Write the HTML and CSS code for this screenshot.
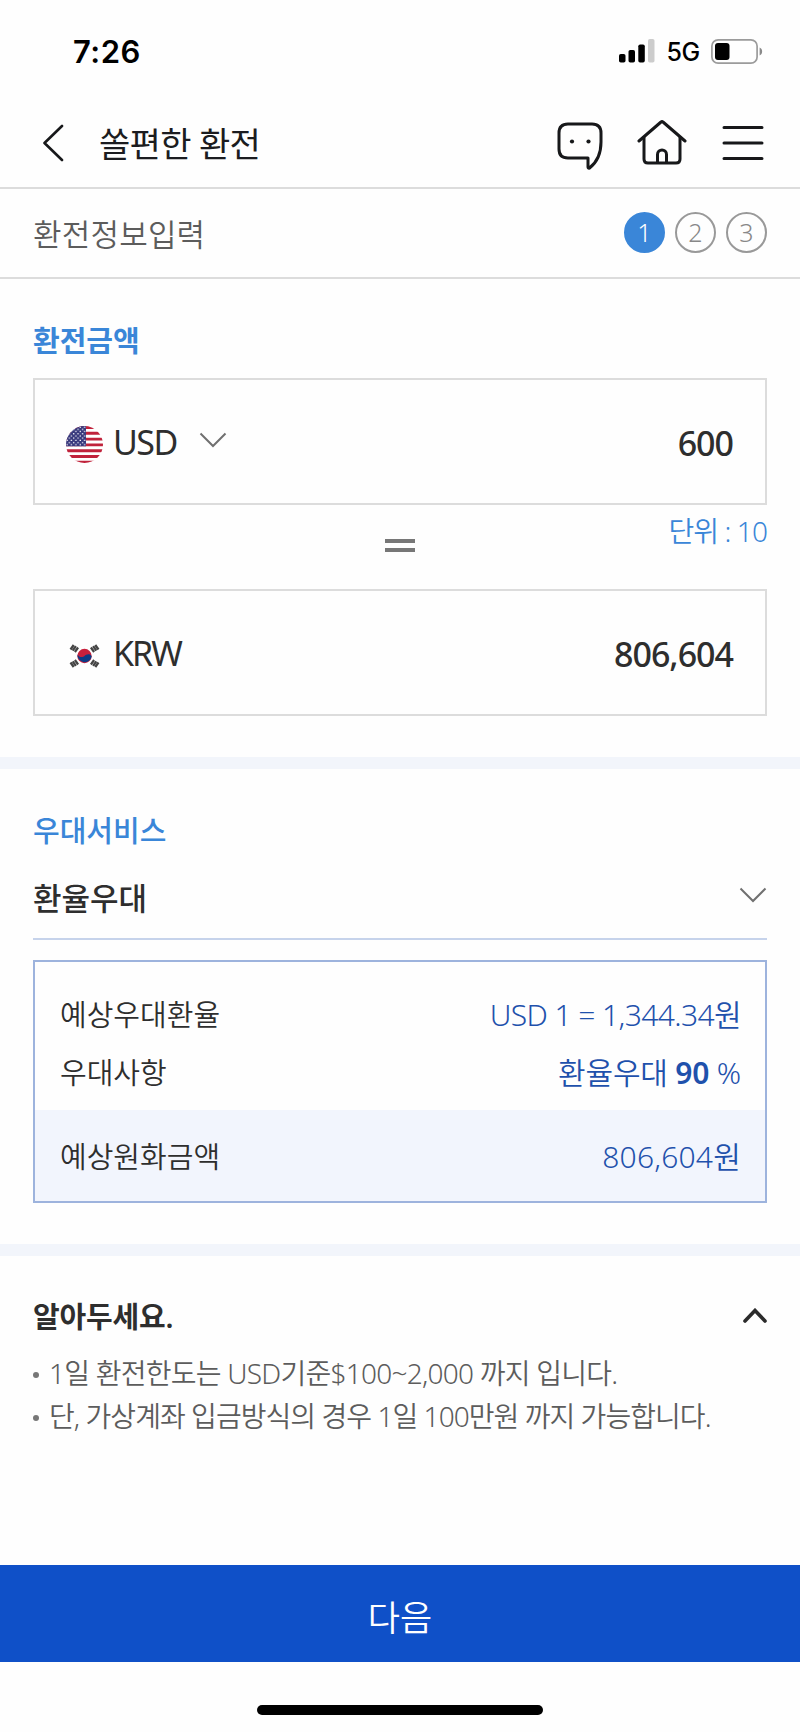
FILE: index.html
```html
<!DOCTYPE html>
<html lang="ko">
<head>
  <meta charset="UTF-8" />
  <meta name="viewport" content="width=device-width, initial-scale=1.0"/>
  <title>쏠편한 환전</title>
  <link rel="stylesheet" href="styles.css">
</head>
<body>
  <!-- Status bar -->
  <div class="status-bar">
    <span class="time">7:26</span>
    <div class="status-icons">
      <svg class="signal" width="36" height="24" viewBox="0 0 36 24">
        <rect x="0" y="15" width="6.5" height="8.5" rx="1.8"/>
        <rect x="9.5" y="11" width="6.5" height="12.5" rx="1.8"/>
        <rect x="19.3" y="5.5" width="6.5" height="18" rx="1.8"/>
        <rect x="29" y="0" width="6.5" height="23.5" rx="1.8" fill="#ccc"/>
      </svg>
      <span class="network">5G</span>
      <svg class="battery" width="52" height="25" viewBox="0 0 52 25">
        <rect x="0.9" y="0.9" width="45.2" height="23.2" rx="6.2" fill="none" stroke="#9b9b9b" stroke-width="1.7"/>
        <rect x="4" y="4" width="14.5" height="17" rx="3"/>
        <path d="M48.6 8.5c3.4 1.3 3.4 6.7 0 8z" fill="#8a8a8a"/>
      </svg>
    </div>
  </div>

  <!-- Header -->
  <header class="header">
    <svg class="back" width="22" height="38" viewBox="0 0 22 38">
      <path d="M19 2 1.5 19 19 36" fill="none" stroke="#17181a" stroke-width="2.6" stroke-linecap="round" stroke-linejoin="round"/>
    </svg>
    <h1>쏠편한 환전</h1>
    <div class="header-icons">
      <svg class="chat" width="46" height="48" viewBox="0 0 46 48" fill="none" stroke="#17181a" stroke-width="3" stroke-linejoin="round">
        <path d="M11 2H35C41 2 44 5.5 44 11V20C44 32 39 41 32.500 46Q31 46.500 31 45V36H11C5 36 2 32.500 2 27V11C2 5.500 5 2 11 2Z"/>
        <circle cx="15" cy="19.5" r="2.1" fill="#17181a" stroke="none"/>
        <circle cx="31.500" cy="19.500" r="2.1" fill="#17181a" stroke="none"/>
      </svg>
      <svg class="home" width="50" height="46" viewBox="0 0 50 46" fill="none" stroke="#17181a" stroke-width="3" stroke-linecap="round" stroke-linejoin="round">
        <path d="M2 22 24 3Q25 2 26 3L48 22"/>
        <path d="M7 18.500V40Q7 44 11 44H39Q43 44 43 40V18.500"/>
        <path d="M20.500 43.500V35.500C20.500 29.500 29.500 29.500 29.500 35.500V43.500"/>
      </svg>
      <svg class="menu" width="42" height="36" viewBox="0 0 42 36" stroke="#17181a" stroke-width="3" stroke-linecap="round">
        <path d="M2 2.5H40M2 18H40M2 33.5H40"/>
      </svg>
    </div>
  </header>

  <div class="step-bar">
    <h2>환전정보입력</h2>
    <ol class="steps">
      <li class="active">1</li>
      <li>2</li>
      <li>3</li>
    </ol>
  </div>

  <!-- Amount -->
  <section class="amount">
    <h3 class="section-title">환전금액</h3>
    <div class="amount-box">
      <svg class="flag" width="38" height="38" viewBox="0 0 38 38">
        <defs>
          <clipPath id="round"><circle cx="18.5" cy="18.5" r="18.5"/></clipPath>
          <pattern id="stars" width="4.4" height="4.4" patternUnits="userSpaceOnUse">
            <circle cx="1.1" cy="1.1" r="0.75" fill="#fff"/>
            <circle cx="3.3" cy="3.3" r="0.75" fill="#fff"/>
          </pattern>
        </defs>
        <g clip-path="url(#round)">
          <rect width="38" height="38" fill="#fff"/>
          <path d="M0 1.500H38M0 7.300H38M0 13.100H38M0 18.900H38M0 24.700H38M0 30.500H38M0 36.300H38" stroke="#c0223b" stroke-width="2.9"/>
          <rect width="20" height="20.3" fill="#37387c"/>
          <rect width="20" height="20.3" fill="url(#stars)"/>
        </g>
      </svg>
      <span class="currency">USD</span>
      <svg class="chevron" width="28" height="16" viewBox="0 0 28 16">
        <path d="M1.5 1.5 14 14 26.5 1.5"/>
      </svg>
      <span class="value">600</span>
    </div>
    <div class="equal-row">
      <span class="equal"></span>
      <span class="unit">단위 : 10</span>
    </div>
    <div class="amount-box">
      <svg class="flag" width="38" height="38" viewBox="0 0 38 38">
        <circle cx="18.5" cy="19" r="7.2" fill="#c8203c"/>
        <path d="M11.5 17.200C13 21 17 20.500 18.500 19S24 16 25.700 19.500A7.200 7.200 0 0 1 11.500 17.200Z" fill="#0d3a85"/>
        <g stroke="#444" stroke-width="2.2">
          <path d="M4.500 12.500 7.700 8M6.700 13.700 9.900 9.200M8.900 15 12.100 10.500"/>
          <path d="M32.500 12.500 29.300 8M30.300 13.700 27.100 9.200M28.100 15 24.900 10.500"/>
          <path d="M4.500 25.500 7.700 30M6.700 24.300 9.900 28.800M8.900 23 12.100 27.500"/>
          <path d="M32.500 25.500 29.300 30M30.300 24.300 27.100 28.800M28.100 23 24.900 27.500"/>
        </g>
      </svg>
      <span class="currency krw">KRW</span>
      <span class="value">806,604</span>
    </div>
  </section>

  <!-- Preferential service -->
  <section class="service">
    <h3 class="section-title">우대서비스</h3>
    <div class="select-row">
      <span>환율우대</span>
      <svg class="chevron" width="28" height="16" viewBox="0 0 28 16">
        <path d="M1.5 1.5 14 14 26.5 1.5"/>
      </svg>
    </div>
    <div class="summary">
      <div class="rates">
        <div class="row">
          <span>예상우대환율</span>
          <span class="result">USD 1 = 1,344.34원</span>
        </div>
        <div class="row">
          <span>우대사항</span>
          <span class="result discount">환율우대 <b>90</b> %</span>
        </div>
      </div>
      <div class="row total">
        <span>예상원화금액</span>
        <span class="result">806,604원</span>
      </div>
    </div>
  </section>

  <!-- Notice -->
  <section class="notice">
    <div class="notice-head">
      <h3>알아두세요.</h3>
      <svg width="24" height="15" viewBox="0 0 24 15">
        <path d="M2 13 12 2.5 22 13" fill="none" stroke="#2b2b2b" stroke-width="3.6" stroke-linecap="round"/>
      </svg>
    </div>
    <ul>
      <li>1일 환전한도는 USD기준$100~2,000 까지 입니다.</li>
      <li class="account">단, 가상계좌 입금방식의 경우 1일 100만원 까지 가능합니다.</li>
    </ul>
  </section>

  <button class="next-btn">다음</button>
  <div class="home-indicator"></div>
</body>
</html>
```

FILE: styles.css
```css
:root {
  --blue: #3a86d8;
  --deep-blue: #1f51ac;
  --primary: #0f50c8;
  --text: #2e2e2e;
  --muted: #5c5c5c;
  --line: #dcdcdc;
  --band: #f2f5fb;
}

* { margin: 0; padding: 0; box-sizing: border-box; }

body {
  width: 800px;
  height: 1732px;
  background: #fefefe;
  color: var(--text);
  font-family: 'Noto Sans', 'Noto Sans CJK KR', sans-serif;
  display: flex;
  flex-direction: column;
}

svg { display: block; flex: none; }
ul, ol { list-style: none; }

/* Status bar */
.status-bar {
  height: 102px;
  padding: 0 37px 0 73px;
  display: flex;
  align-items: center;
  justify-content: space-between;
  font-family: Inter, sans-serif;
  color: #000;
}
.time {
  font-size: 31px;
  font-weight: 600;
  letter-spacing: 0.5px;
}
.status-icons {
  display: flex;
  align-items: center;
}
.network {
  margin: 2px 11px 0 11px;
  font-size: 25px;
  font-weight: 500;
  letter-spacing: -0.3px;
}

/* Header */
.header {
  height: 87px;
  padding: 0 36px 4px 43px;
  border-bottom: 2px solid var(--line);
  display: flex;
  align-items: center;
}
.header h1 {
  margin-left: 34px;
  padding-top: 2px;
  font-size: 34px;
  font-weight: 400;
  line-height: 48px;
  letter-spacing: -0.7px;
  color: #1b1c20;
}
.header-icons {
  margin-left: auto;
  display: flex;
  align-items: center;
  gap: 34px;
}
.chat { margin-top: 6px; }
.home { margin: 0 1px 1px 0; }
.menu { margin-top: 1px; }

.step-bar {
  height: 90px;
  padding: 0 33px 4px;
  border-bottom: 2px solid var(--line);
  display: flex;
  align-items: center;
  justify-content: space-between;
}
.step-bar h2 {
  padding-top: 5px;
  font-size: 31px;
  font-weight: 350;
  line-height: 44px;
  letter-spacing: 0.2px;
  color: var(--muted);
}
.steps {
  padding-top: 2px;
  display: flex;
  gap: 10px;
}
.steps li {
  width: 41px;
  height: 41px;
  border: 2px solid #999;
  border-radius: 50%;
  font-size: 25px;
  font-weight: 300;
  line-height: 37px;
  text-align: center;
  color: #888;
}
.steps .active {
  border-color: var(--blue);
  background: var(--blue);
  color: #fff;
}

.section-title {
  padding-top: 1px;
  font-size: 29px;
  font-weight: 500;
  line-height: 42px;
  color: var(--blue);
}

/* Amount */
.amount {
  height: 490px;
  padding: 40px 33px 0;
  border-bottom: 12px solid var(--band);
}
.amount .section-title {
  margin-bottom: 16px;
  font-weight: 600;
}
.amount-box {
  height: 127px;
  padding: 0 32px 0 31px;
  border: 2px solid var(--line);
  display: flex;
  align-items: center;
}
.flag { margin-top: 6px; }
.currency {
  margin-left: 9px;
  font-size: 34px;
  line-height: 48px;
  letter-spacing: -1.5px;
}
.krw { letter-spacing: -2px; }
.chevron path {
  fill: none;
  stroke: #707070;
  stroke-width: 2;
}
.amount-box .chevron {
  margin: 0 0 4px 22px;
}
.value {
  margin-left: auto;
  padding-top: 2px;
  font-size: 34px;
  font-weight: 500;
  line-height: 48px;
  letter-spacing: -1px;
}
.equal-row {
  height: 84px;
  display: grid;
  grid-template-columns: 1fr 30px 1fr;
}
.equal {
  grid-column: 2;
  height: 13px;
  margin-top: 34px;
  border-top: 4px solid #777;
  border-bottom: 4px solid #777;
}
.unit {
  margin-top: 6px;
  font-size: 28px;
  font-weight: 350;
  line-height: 40px;
  letter-spacing: -0.9px;
  text-align: right;
  color: var(--blue);
}

/* Preferential service */
.service {
  height: 487px;
  padding: 40px 33px 0;
  border-bottom: 12px solid var(--band);
}
.select-row {
  height: 88px;
  border-bottom: 2px solid #c6d3eb;
  display: flex;
  align-items: center;
  justify-content: space-between;
  font-size: 31px;
  font-weight: 500;
  line-height: 44px;
}
.select-row span { padding-top: 6px; }
.summary {
  height: 243px;
  margin-top: 20px;
  border: 2px solid #9db3dd;
}
.rates {
  height: 148px;
  padding: 24px 0 0;
}
.row {
  height: 58px;
  padding: 0 24px 0 25px;
  display: flex;
  align-items: center;
  justify-content: space-between;
  font-size: 29px;
  font-weight: 350;
  line-height: 42px;
}
.result {
  font-size: 30px;
  letter-spacing: -0.6px;
  color: var(--deep-blue);
}
.result b { font-weight: 600; }
.discount { letter-spacing: -0.2px; }
.total {
  height: 91px;
  padding-top: 2px;
  background: #f2f5fd;
}
.total .result { letter-spacing: 0.2px; }

/* Notice */
.notice {
  height: 309px;
  padding: 40px 33px 0;
}
.notice-head {
  display: flex;
  align-items: center;
  justify-content: space-between;
}
.notice-head svg { margin-bottom: 3px; }
.notice h3 {
  font-size: 29px;
  font-weight: 600;
  line-height: 42px;
  letter-spacing: -0.2px;
}
.notice ul { margin-top: 14px; }
.notice li {
  display: flex;
  align-items: center;
  gap: 10px;
  font-size: 28px;
  font-weight: 350;
  line-height: 43px;
  letter-spacing: -0.75px;
  white-space: nowrap;
  color: var(--muted);
}
.notice .account { letter-spacing: -0.95px; }
.notice li::before {
  content: '';
  width: 6px;
  height: 6px;
  margin-top: 2px;
  border-radius: 50%;
  background: #777;
}

.next-btn {
  height: 97px;
  padding-top: 8px;
  border: 0;
  background: var(--primary);
  color: #fff;
  font-family: inherit;
  font-size: 35px;
  font-weight: 350;
  line-height: 50px;
}
.home-indicator {
  width: 286px;
  height: 10px;
  margin: 43px auto 0;
  border-radius: 5px;
  background: #000;
}
```
